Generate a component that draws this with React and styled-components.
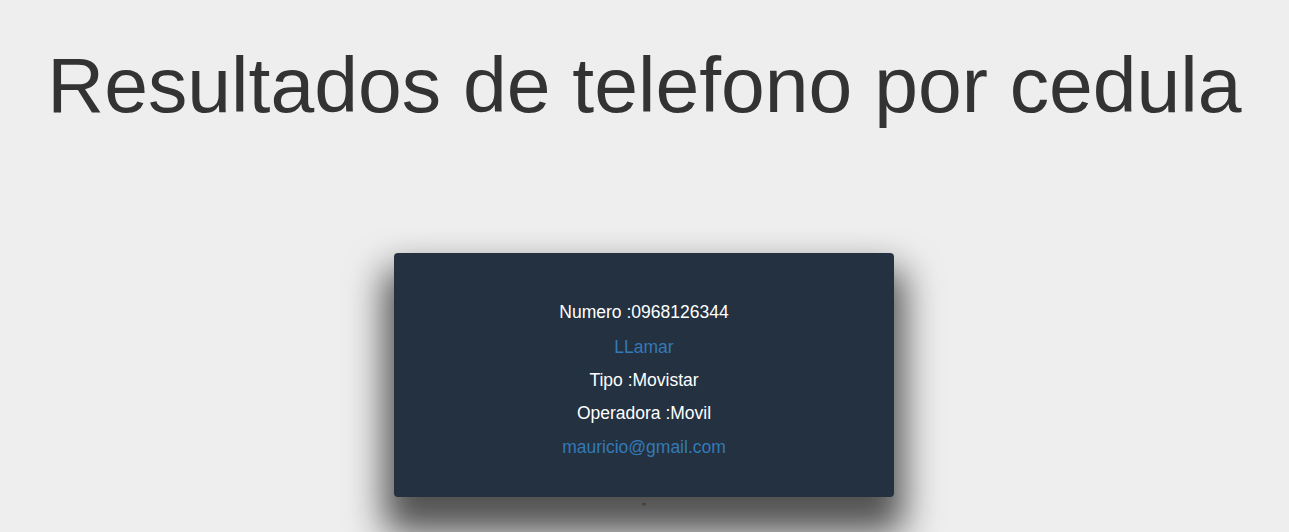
import styled, { createGlobalStyle } from "styled-components";

const GlobalStyle = createGlobalStyle`
  html, body {
    margin: 0;
    padding: 0;
    background: #eeeeee;
    font-family: "Liberation Sans", Arial, Helvetica, sans-serif;
  }
`;

const Page = styled.div`
  display: flex;
  flex-direction: column;
  align-items: center;
  min-height: 532px;
`;

const Title = styled.h1`
  margin: 39px 0 0;
  font-size: 78.7px;
  font-weight: 400;
  line-height: 92px;
  color: #333333;
  text-align: center;
`;

const Card = styled.div`
  margin: 122px 1px 0 0;
  width: 500px;
  height: 244px;
  box-sizing: border-box;
  padding-top: 42px;
  background: #243140;
  border-radius: 4px;
  box-shadow: 0 26px 36px 10px rgba(0, 0, 0, 0.66);
  display: flex;
  flex-direction: column;
  align-items: center;
`;

const Line = styled.p`
  margin: 0;
  font-size: 17.5px;
  line-height: ${(p) => p.$lh}px;
  color: ${(p) => (p.$link ? "#337ab7" : "#ffffff")};
`;

const Quote = styled.span`
  margin: 4px 1px 0 0;
  font-size: 11px;
  color: #2a2a2a;
  line-height: 12px;
`;

export default function App() {
  return (
    <>
      <GlobalStyle />
      <Page>
        <Title>Resultados de telefono por cedula</Title>
        <Card>
          <Line $lh={35}>Numero :0968126344</Line>
          <Line $link $lh={34}>LLamar</Line>
          <Line $lh={33}>Tipo :Movistar</Line>
          <Line $lh={33}>Operadora :Movil</Line>
          <Line $link $lh={34}>mauricio@gmail.com</Line>
        </Card>
        <Quote>"</Quote>
      </Page>
    </>
  );
}
